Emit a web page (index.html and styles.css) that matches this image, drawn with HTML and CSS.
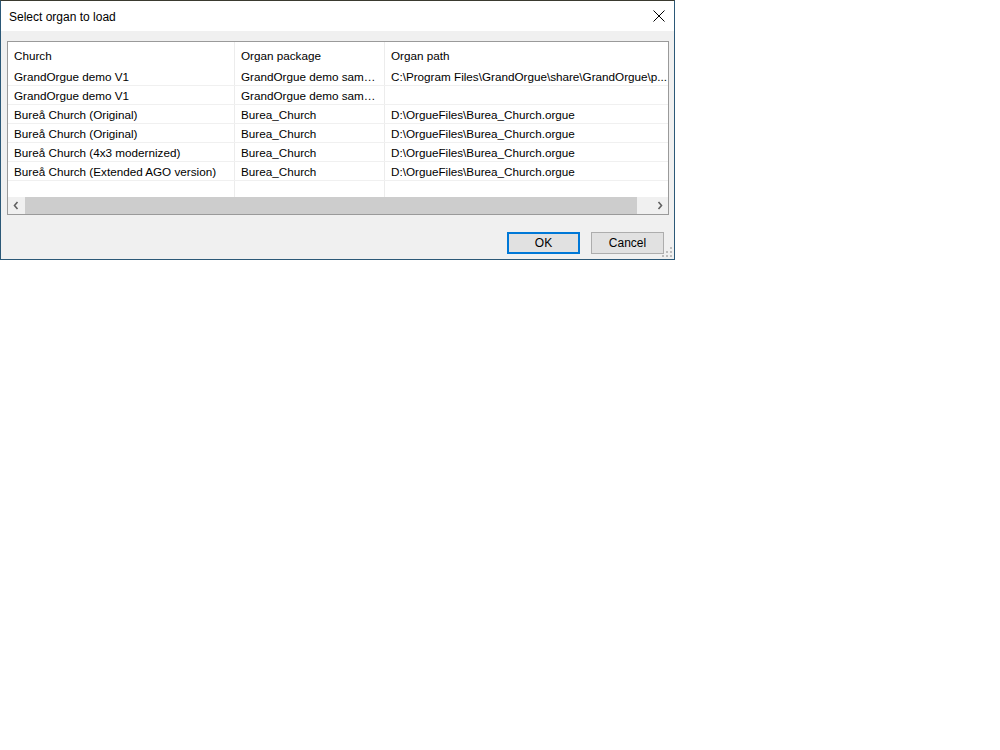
FILE: index.html
```html
<!DOCTYPE html>
<html>
<head>
<meta charset="utf-8">
<link rel="stylesheet" href="styles.css">
</head>
<body>
<div class="dialog">
  <div class="titlebar">
    <span class="title">Select organ to load</span>
    <svg class="close" width="12" height="12" viewBox="0 0 12 12"><path d="M0.5 0.5 L11.5 11.5 M11.5 0.5 L0.5 11.5" stroke="#000" stroke-width="1" fill="none"/></svg>
  </div>
  <div class="content">
    <div class="list">
      <div class="grid">
        <div class="row header"><div class="cell c1">Church</div><div class="cell c2">Organ package</div><div class="cell c3">Organ path</div></div>
        <div class="row"><div class="cell c1">GrandOrgue demo V1</div><div class="cell c2 ell">GrandOrgue demo sample set</div><div class="cell c3">C:\Program Files\GrandOrgue\share\GrandOrgue\p...</div></div>
        <div class="row"><div class="cell c1">GrandOrgue demo V1</div><div class="cell c2 ell">GrandOrgue demo sample set</div><div class="cell c3"></div></div>
        <div class="row"><div class="cell c1">Bureå Church (Original)</div><div class="cell c2">Burea_Church</div><div class="cell c3">D:\OrgueFiles\Burea_Church.orgue</div></div>
        <div class="row"><div class="cell c1">Bureå Church (Original)</div><div class="cell c2">Burea_Church</div><div class="cell c3">D:\OrgueFiles\Burea_Church.orgue</div></div>
        <div class="row"><div class="cell c1">Bureå Church (4x3 modernized)</div><div class="cell c2">Burea_Church</div><div class="cell c3">D:\OrgueFiles\Burea_Church.orgue</div></div>
        <div class="row"><div class="cell c1">Bureå Church (Extended AGO version)</div><div class="cell c2">Burea_Church</div><div class="cell c3">D:\OrgueFiles\Burea_Church.orgue</div></div>
        <div class="row filler"><div class="cell c1"></div><div class="cell c2"></div><div class="cell c3"></div></div>
      </div>
      <div class="hscroll">
        <div class="arrow"><svg width="17" height="17" viewBox="0 0 17 17"><path d="M9.5 5 L6.5 8.5 L9.5 12" stroke="#606060" stroke-width="1.6" fill="none"/></svg></div>
        <div class="thumb"></div>
        <div class="track"></div>
        <div class="arrow"><svg width="17" height="17" viewBox="0 0 17 17"><path d="M7.5 5 L10.5 8.5 L7.5 12" stroke="#606060" stroke-width="1.6" fill="none"/></svg></div>
      </div>
    </div>
    <div class="buttons">
      <button class="btn default">OK</button>
      <button class="btn">Cancel</button>
    </div>
  </div>
  <svg class="grip" width="10" height="10" viewBox="0 0 10 10" fill="#bdbdbd">
    <rect x="8" y="0" width="2" height="2"/>
    <rect x="4" y="4" width="2" height="2"/><rect x="8" y="4" width="2" height="2"/>
    <rect x="0" y="8" width="2" height="2"/><rect x="4" y="8" width="2" height="2"/><rect x="8" y="8" width="2" height="2"/>
  </svg>
</div>
</body>
</html>
```
FILE: styles.css
```css
html, body {
  margin: 0;
  padding: 0;
  background: #ffffff;
}
body {
  font-family: "Liberation Sans", "DejaVu Sans", sans-serif;
  font-size: 12px;
  color: #000;
}
.dialog {
  position: relative;
  width: 673px;
  height: 258px;
  border: 1px solid #2b5877;
  border-top-color: #3a3a2f;
  background: #f0f0f0;
  display: flex;
  flex-direction: column;
}
.titlebar {
  height: 30px;
  background: #ffffff;
  display: flex;
  align-items: center;
  justify-content: space-between;
  padding-left: 8px;
  flex: none;
}
.title {
  font-size: 12px;
  padding-top: 1px;
}
.close {
  margin-right: 9px;
}
.content {
  flex: 1;
  padding: 10px 5px 0 6px;
  display: flex;
  flex-direction: column;
}
.list {
  height: 172px;
  border: 1px solid #9a9a9a;
  background: #ffffff;
  display: flex;
  flex-direction: column;
  flex: none;
}
.grid {
  flex: 1;
  display: flex;
  flex-direction: column;
  font-size: 11.7px;
}
.row {
  display: flex;
  height: 18px;
  line-height: 18px;
  border-bottom: 1px solid #f0f0f0;
}
.row.header {
  height: 25px;
  line-height: 25px;
  border-bottom: none;
}
.row.filler {
  flex: 1;
  border-bottom: none;
}
.cell {
  box-sizing: border-box;
  padding-left: 6px;
  padding-top: 1px;
  white-space: nowrap;
  overflow: hidden;
  border-right: 1px solid #ececec;
}
.c1 { width: 227px; flex: none; }
.c2 { width: 150px; flex: none; }
.c3 { flex: 1; border-right: none; }
.ell { text-overflow: ellipsis; padding-right: 4px; }
.hscroll {
  height: 17px;
  display: flex;
  background: #f0f0f0;
  flex: none;
}
.arrow {
  width: 17px;
  height: 17px;
  flex: none;
}
.arrow svg { display: block; }
.thumb {
  width: 612px;
  background: #cdcdcd;
  flex: none;
}
.track {
  flex: 1;
}
.buttons {
  margin-top: 17px;
  display: flex;
  justify-content: flex-end;
  gap: 11px;
  padding-right: 5px;
}
.btn {
  box-sizing: border-box;
  width: 73px;
  height: 22px;
  border: 1px solid #adadad;
  background: #e1e1e1;
  font-family: "Liberation Sans", "DejaVu Sans", sans-serif;
  font-size: 12px;
  color: #000;
  padding: 0;
}
.btn.default {
  border: 2px solid #0078d7;
}
.grip {
  position: absolute;
  right: 2px;
  bottom: 2px;
}
```
